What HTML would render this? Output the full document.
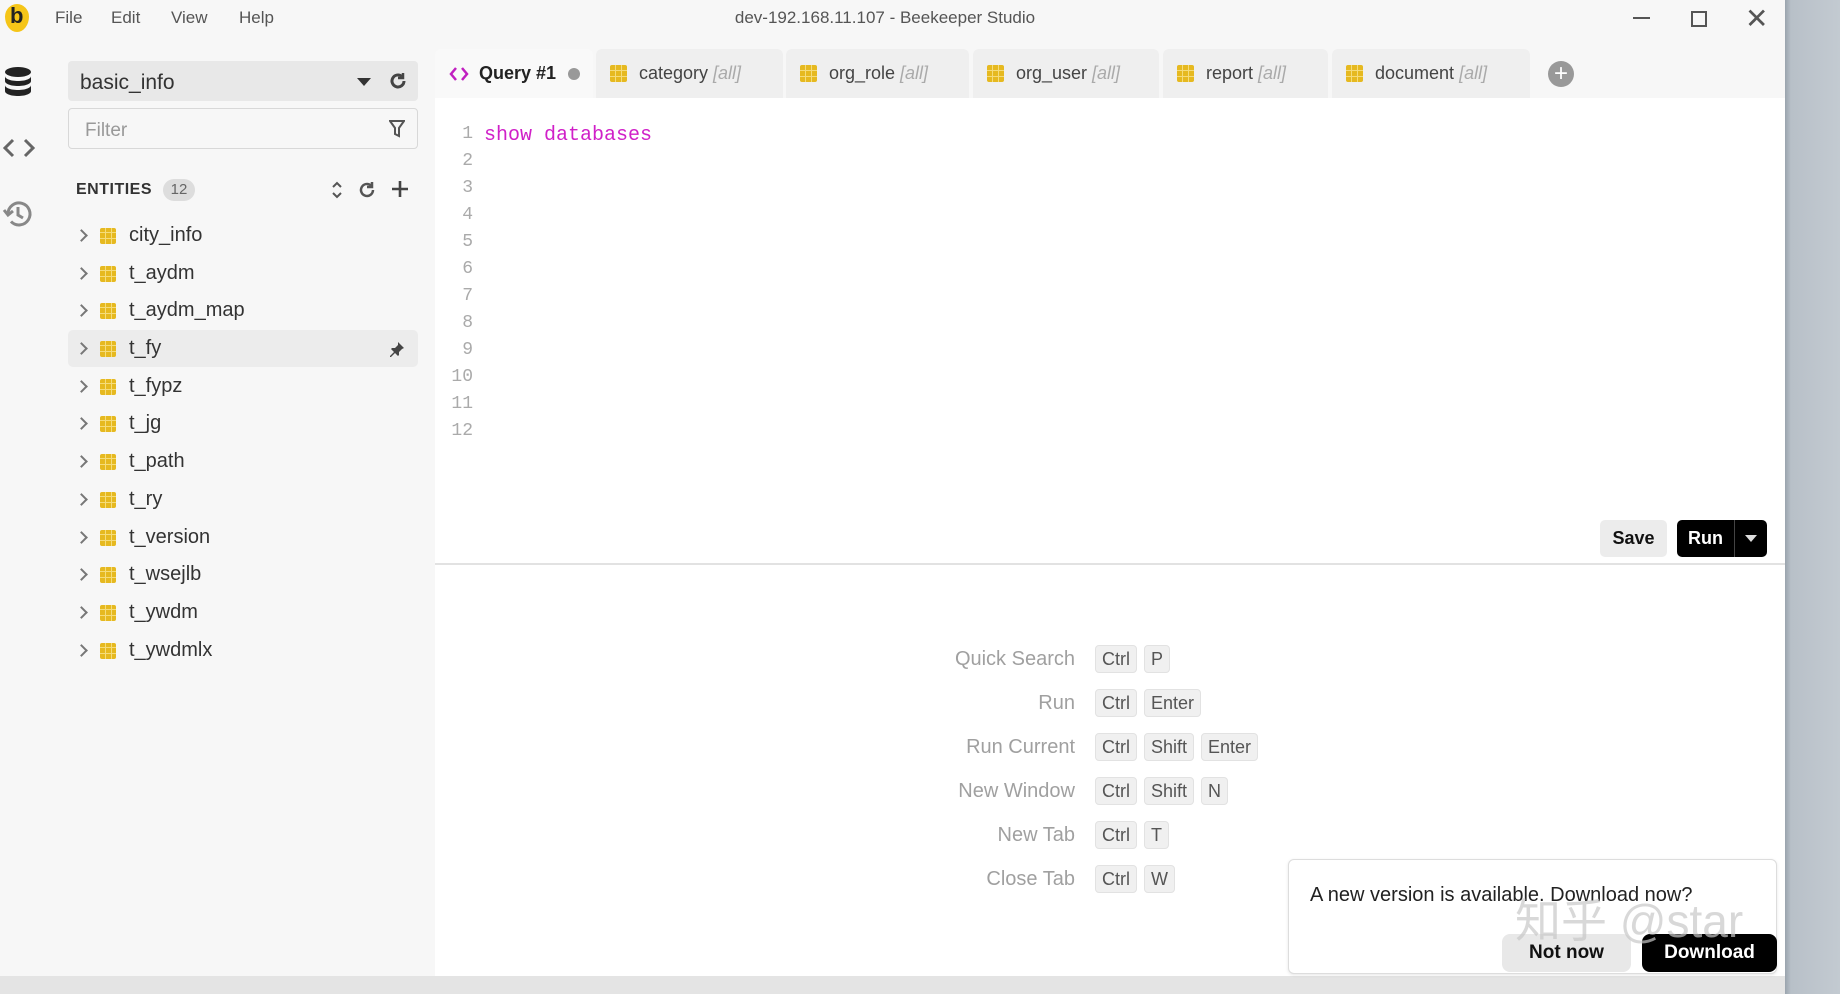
<!DOCTYPE html>
<html><head><meta charset="utf-8"><style>
*{box-sizing:border-box;margin:0;padding:0}
body{width:1840px;height:994px;overflow:hidden;background:#b9c1c9;font-family:"Liberation Sans",sans-serif;position:relative;color:#333}
.abs{position:absolute}
#win{position:absolute;left:0;top:0;width:1785px;height:994px;background:#f7f7f7}
.menu{top:8px;font-size:17px;color:#555}
.tab{position:absolute;top:49px;height:49px;background:#efefef;border-radius:6px 6px 0 0;font-size:18px;color:#444;display:flex;align-items:center;padding-left:14px}
.tab i{color:#aaa;margin-left:5px}
.grid{display:inline-block;width:17px;height:17px;background:#e6b920;border-radius:2px;margin-right:12px;background-image:linear-gradient(90deg,transparent 5px,#f5dc7a 5px,#f5dc7a 6px,transparent 6px,transparent 11px,#f5dc7a 11px,#f5dc7a 12px,transparent 12px),linear-gradient(0deg,transparent 5px,#f5dc7a 5px,#f5dc7a 6px,transparent 6px,transparent 11px,#f5dc7a 11px,#f5dc7a 12px,transparent 12px)}
.item{position:absolute;left:68px;width:350px;height:37px;font-size:20px;color:#333;display:flex;align-items:center;border-radius:5px}
.item .ch{width:9px;height:9px;border-right:2px solid #777;border-bottom:2px solid #777;transform:rotate(-45deg);margin-left:9px;margin-right:14px}
.item .grid{width:16px;height:16px;margin-right:13px}
.ln{position:absolute;left:445px;width:28px;text-align:right;font-family:"Liberation Mono",monospace;font-size:18px;color:#aaa}
.lab{position:absolute;right:710px;font-size:20px;color:#a0a0a0;text-align:right}
.key{position:absolute;height:28px;background:#f0f0f0;border:1px solid #e2e2e2;border-radius:4px;font-size:18px;color:#555;padding:0 6px;line-height:26px}
</style></head><body>
<div id="win">
<div class="abs" style="left:5px;top:4px;width:24px;height:28px;background:#f5c518;border-radius:50% 50% 50% 50%/45% 45% 55% 55%"></div>
<div class="abs" style="left:10px;top:3px;font-size:22px;font-weight:bold;color:#222">b</div>
<div class="abs menu" style="left:55px">File</div>
<div class="abs menu" style="left:111px">Edit</div>
<div class="abs menu" style="left:171px">View</div>
<div class="abs menu" style="left:239px">Help</div>
<div class="abs" style="left:0;width:1770px;top:8px;text-align:center;font-size:17px;color:#555">dev-192.168.11.107 - Beekeeper Studio</div>
<div class="abs" style="left:1633px;top:17px;width:17px;height:2px;background:#555"></div>
<div class="abs" style="left:1691px;top:11px;width:16px;height:16px;border:2px solid #555"></div>
<div class="abs" style="left:1745px;top:2px;font-size:28px;color:#555">✕</div>

<svg class="abs" style="left:4px;top:66px" width="28" height="32" viewBox="0 0 28 32"><ellipse cx="14" cy="6" rx="13" ry="5" fill="#222"/><path d="M1 10v5c0 3 6 5 13 5s13-2 13-5v-5c0 3-6 5-13 5S1 13 1 10z" fill="#222"/><path d="M1 19v6c0 3 6 5 13 5s13-2 13-5v-6c0 3-6 5-13 5S1 22 1 19z" fill="#222"/></svg>
<svg class="abs" style="left:3px;top:138px" width="32" height="20" viewBox="0 0 32 20" fill="none" stroke="#666" stroke-width="3"><path d="M10 2L2 10l8 8M22 2l8 8-8 8"/></svg>
<svg class="abs" style="left:2px;top:198px" width="32" height="32" viewBox="0 0 32 32" fill="none" stroke="#888" stroke-width="3"><path d="M6 16a11 11 0 1 1 3 7.5"/><path d="M2 12l4 5 5-4"/><path d="M16 9v8l5 3"/></svg>

<div class="abs" style="left:68px;top:61px;width:350px;height:40px;background:#e8e8e8;border-radius:4px"></div>
<div class="abs" style="left:80px;top:71px;font-size:21px;color:#333">basic_info</div>
<div class="abs" style="left:357px;top:78px;width:0;height:0;border-left:7px solid transparent;border-right:7px solid transparent;border-top:8px solid #333"></div>
<svg class="abs" style="left:388px;top:71px" width="20" height="20" viewBox="0 0 20 20" fill="none" stroke="#444" stroke-width="3"><path d="M16 10a6 6 0 1 1-2-4.5"/><path d="M15 2v5h-5" stroke-width="2.5"/></svg>
<div class="abs" style="left:68px;top:108px;width:350px;height:41px;border:1px solid #d8d8d8;border-radius:4px;background:#f7f7f7"></div>
<div class="abs" style="left:85px;top:120px;font-size:19px;color:#999">Filter</div>
<svg class="abs" style="left:389px;top:120px" width="16" height="18" viewBox="0 0 16 18" fill="none" stroke="#555" stroke-width="2"><path d="M1 1h14l-5 7v8l-4-2V8z"/></svg>

<div class="abs" style="left:76px;top:181px;font-size:16px;font-weight:bold;color:#333;letter-spacing:.5px">ENTITIES</div>
<div class="abs" style="left:163px;top:179px;width:32px;height:22px;background:#ddd;border-radius:11px;font-size:15px;color:#666;text-align:center;line-height:22px">12</div>
<svg class="abs" style="left:331px;top:180px" width="12" height="20" viewBox="0 0 12 20" fill="none" stroke="#555" stroke-width="2"><path d="M2 7l4-4 4 4M2 13l4 4 4-4"/></svg>
<svg class="abs" style="left:357px;top:180px" width="20" height="20" viewBox="0 0 20 20" fill="none" stroke="#555" stroke-width="2.5"><path d="M16 10a6 6 0 1 1-2-4.5"/><path d="M15 2v5h-5"/></svg>
<svg class="abs" style="left:391px;top:180px" width="18" height="18" viewBox="0 0 18 18" stroke="#444" stroke-width="2.6"><path d="M9 1v16M1 9h16"/></svg>

<div class="item" style="top:217px"><span class="ch"></span><span class="grid"></span>city_info</div>
<div class="item" style="top:255px"><span class="ch"></span><span class="grid"></span>t_aydm</div>
<div class="item" style="top:292px"><span class="ch"></span><span class="grid"></span>t_aydm_map</div>
<div class="item" style="top:330px;background:#ececec"><span class="ch"></span><span class="grid"></span>t_fy<svg style="position:absolute;right:13px;top:11px" width="16" height="16" viewBox="0 0 16 16" fill="#444"><path d="M9 1l6 6-2 1-3 3 0 3-1 1-3-3-4 4-1 0 0-1 4-4-3-3 1-1 3 0 3-3z"/></svg></div>
<div class="item" style="top:368px"><span class="ch"></span><span class="grid"></span>t_fypz</div>
<div class="item" style="top:405px"><span class="ch"></span><span class="grid"></span>t_jg</div>
<div class="item" style="top:443px"><span class="ch"></span><span class="grid"></span>t_path</div>
<div class="item" style="top:481px"><span class="ch"></span><span class="grid"></span>t_ry</div>
<div class="item" style="top:519px"><span class="ch"></span><span class="grid"></span>t_version</div>
<div class="item" style="top:556px"><span class="ch"></span><span class="grid"></span>t_wsejlb</div>
<div class="item" style="top:594px"><span class="ch"></span><span class="grid"></span>t_ywdm</div>
<div class="item" style="top:632px"><span class="ch"></span><span class="grid"></span>t_ywdmlx</div>

<div class="tab" style="left:435px;width:158px;background:#f9f9f9;font-weight:bold;color:#222"><svg width="20" height="14" viewBox="0 0 20 14" fill="none" stroke="#c020c0" stroke-width="2.5" style="margin-right:10px"><path d="M7 1L2 7l5 6M13 1l5 6-5 6"/></svg>Query #1<span style="position:absolute;right:13px;width:12px;height:12px;border-radius:50%;background:#999"></span></div>
<div class="tab" style="left:596px;width:187px"><span class="grid"></span>category<i>[all]</i></div>
<div class="tab" style="left:786px;width:183px"><span class="grid"></span>org_role<i>[all]</i></div>
<div class="tab" style="left:973px;width:186px"><span class="grid"></span>org_user<i>[all]</i></div>
<div class="tab" style="left:1163px;width:165px"><span class="grid"></span>report<i>[all]</i></div>
<div class="tab" style="left:1332px;width:198px"><span class="grid"></span>document<i>[all]</i></div>
<div class="abs" style="left:1548px;top:61px;width:26px;height:26px;border-radius:50%;background:#999;color:#fff;font-size:24px;text-align:center;line-height:25px">+</div>

<div class="abs" style="left:435px;top:98px;width:1350px;height:466px;background:#fff"></div>
<div class="ln" style="top:124px">1</div><div class="ln" style="top:151px">2</div><div class="ln" style="top:178px">3</div><div class="ln" style="top:205px">4</div><div class="ln" style="top:232px">5</div><div class="ln" style="top:259px">6</div><div class="ln" style="top:286px">7</div><div class="ln" style="top:313px">8</div><div class="ln" style="top:340px">9</div><div class="ln" style="top:367px">10</div><div class="ln" style="top:394px">11</div><div class="ln" style="top:421px">12</div>
<div class="abs" style="left:484px;top:124px;font-family:'Liberation Mono',monospace;font-size:20px;color:#d020c8">show databases</div>
<div class="abs" style="left:1600px;top:520px;width:67px;height:37px;background:#ececec;border-radius:5px;font-size:18px;font-weight:bold;color:#111;text-align:center;line-height:37px">Save</div>
<div class="abs" style="left:1677px;top:520px;width:90px;height:37px;background:#000;border-radius:5px"></div>
<div class="abs" style="left:1677px;top:520px;width:58px;height:37px;font-size:18px;font-weight:bold;color:#fff;text-align:center;line-height:37px;border-right:1px solid #444">Run</div>
<div class="abs" style="left:1745px;top:535px;width:0;height:0;border-left:6px solid transparent;border-right:6px solid transparent;border-top:7px solid #ddd"></div>
<div class="abs" style="left:435px;top:563px;width:1350px;height:2px;background:#e2e2e2"></div>

<div class="abs" style="left:435px;top:565px;width:1350px;height:411px;background:#fff"></div>
<div class="lab" style="top:648px">Quick Search</div>
<div class="key" style="left:1095px;top:645px">Ctrl</div><div class="key" style="left:1144px;top:645px">P</div>
<div class="lab" style="top:692px">Run</div>
<div class="key" style="left:1095px;top:689px">Ctrl</div><div class="key" style="left:1144px;top:689px">Enter</div>
<div class="lab" style="top:736px">Run Current</div>
<div class="key" style="left:1095px;top:733px">Ctrl</div><div class="key" style="left:1144px;top:733px">Shift</div><div class="key" style="left:1201px;top:733px">Enter</div>
<div class="lab" style="top:780px">New Window</div>
<div class="key" style="left:1095px;top:777px">Ctrl</div><div class="key" style="left:1144px;top:777px">Shift</div><div class="key" style="left:1201px;top:777px">N</div>
<div class="lab" style="top:824px">New Tab</div>
<div class="key" style="left:1095px;top:821px">Ctrl</div><div class="key" style="left:1144px;top:821px">T</div>
<div class="lab" style="top:868px">Close Tab</div>
<div class="key" style="left:1095px;top:865px">Ctrl</div><div class="key" style="left:1144px;top:865px">W</div>

<div class="abs" style="left:0;top:976px;width:1785px;height:18px;background:#e4e4e4"></div>

<div class="abs" style="left:1288px;top:859px;width:489px;height:115px;background:#fff;border:1px solid #ddd;border-radius:6px;box-shadow:0 1px 3px rgba(0,0,0,.1)"></div>
<div class="abs" style="left:1310px;top:884px;font-size:20px;color:#222">A new version is available. Download now?</div>
<div class="abs" style="left:1502px;top:934px;width:129px;height:38px;background:#e8e8e8;border-radius:8px;font-size:19px;font-weight:bold;color:#111;text-align:center;line-height:38px">Not now</div>
<div class="abs" style="left:1642px;top:934px;width:135px;height:38px;background:#000;border-radius:8px;font-size:19px;font-weight:bold;color:#fff;text-align:center;line-height:38px">Download</div>
<div class="abs" style="left:1515px;top:885px;font-size:46px;color:rgba(200,200,200,.7);font-family:'Liberation Sans','Noto Sans CJK SC',sans-serif">知乎 @star</div>
</div>
<div class="abs" style="left:1785px;top:0;width:55px;height:994px;background:linear-gradient(90deg,#9aa4ae 0,#b8c0c8 6px,#c3cad1 100%)"></div>
</body></html>
